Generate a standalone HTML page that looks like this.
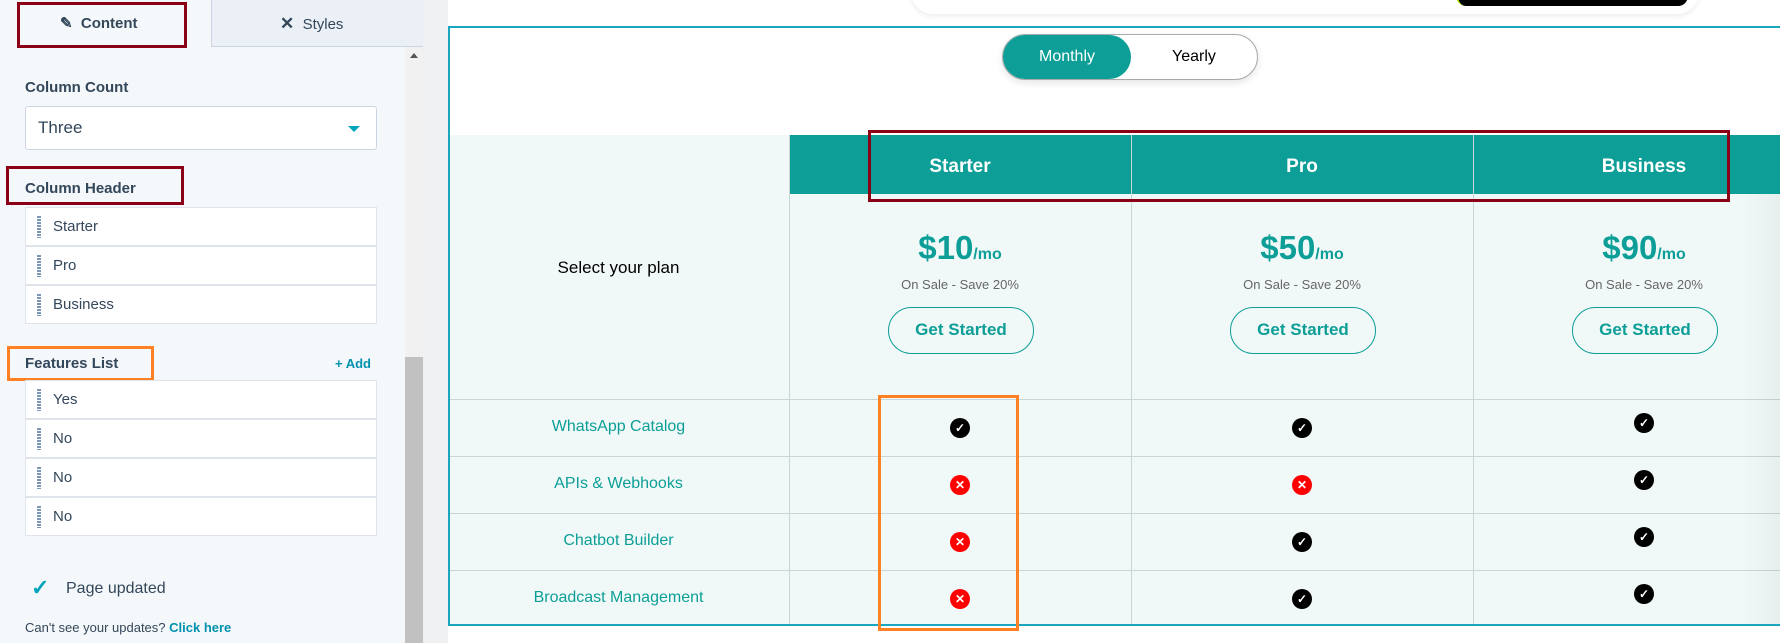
<!DOCTYPE html>
<html><head><style>
*{box-sizing:border-box;margin:0;padding:0}
body{width:1780px;height:643px;overflow:hidden;background:#fff;font-family:"Liberation Sans",sans-serif;position:relative}
.a{position:absolute}
.lp{left:0;top:0;width:405px;height:643px;background:#f5f8fa}
.lbl{color:#33475b;font-weight:bold;font-size:15px}
.item{left:25px;width:352px;height:39px;background:#fff;border:1px solid #dfe3eb;font-size:15px;color:#33475b;line-height:37px;padding-left:27px}
.grip{position:absolute;left:11px;top:8px;width:4px;height:22px;background:repeating-linear-gradient(#7c98b6 0 2px,transparent 2px 3px)}
.cell{position:absolute;text-align:center}
.hd{color:#fff;font-weight:bold;font-size:19px;top:137px;height:59px;line-height:59px;width:342px}
.price{color:#0c9e97;font-weight:bold;font-size:33px;top:229px;width:342px}
.price small{font-size:16px;font-weight:bold}
.sale{color:#666;font-size:13px;top:277px;width:342px}
.btn{top:307px;width:146px;height:47px;border:1.5px solid #0c9e97;border-radius:24px;color:#0c9e97;font-weight:bold;font-size:17px;line-height:44px}
.feat{color:#0c9e97;font-size:16px;width:341px;left:448px}
.ic{width:20px;height:20px;border-radius:50%;color:#fff;font-size:12px;line-height:20px;text-align:center;font-weight:bold}
.ok{background:#000}.no{background:#f00}
</style></head><body>
<div class="a lp"></div>
<div class="a" style="left:211px;top:0;width:212px;height:47px;background:#eaf0f6;border-left:1px solid #cbd6e2;border-bottom:1px solid #cbd6e2"></div>
<div class="a" style="left:17px;top:2px;width:170px;height:46px;border:3px solid #8b0016"></div>
<div class="a lbl" style="left:60px;top:14px;font-size:15px">✎&nbsp; Content</div>
<div class="a" style="left:280px;top:14px;font-size:15px;color:#33475b"><b style="font-size:17px">✕</b>&nbsp; Styles</div>
<div class="a" style="left:405px;top:47px;width:18px;height:596px;background:#f1f1f1"></div>
<div class="a" style="left:405px;top:357px;width:18px;height:286px;background:#c1c1c1"></div>
<div class="a" style="left:410px;top:49px;border:4px solid transparent;border-bottom:5px solid #555"></div>
<div class="a" style="left:423px;top:0;width:25px;height:643px;background:#eef0f2"></div>
<div class="a lbl" style="left:25px;top:79px">Column Count</div>
<div class="a" style="left:25px;top:106px;width:352px;height:44px;background:#fff;border:1px solid #cbd6e2;border-radius:3px;font-size:17px;color:#33475b;line-height:42px;padding-left:12px">Three<span class="a" style="right:16px;top:19px;border:6px solid transparent;border-top:6px solid #00a4bd;border-bottom:0"></span></div>
<div class="a" style="left:6px;top:166px;width:178px;height:39px;border:3px solid #8b0016"></div>
<div class="a lbl" style="left:25px;top:180px">Column Header</div>
<div class="a item" style="top:207px"><i class="grip"></i>Starter</div>
<div class="a item" style="top:246px"><i class="grip"></i>Pro</div>
<div class="a item" style="top:285px"><i class="grip"></i>Business</div>
<div class="a" style="left:7px;top:346px;width:147px;height:35px;border:3px solid #ff8124"></div>
<div class="a lbl" style="left:25px;top:355px">Features List</div>
<div class="a" style="left:335px;top:356px;font-size:13px;font-weight:bold;color:#0091ae">+ Add</div>
<div class="a item" style="top:380px"><i class="grip"></i>Yes</div>
<div class="a item" style="top:419px"><i class="grip"></i>No</div>
<div class="a item" style="top:458px"><i class="grip"></i>No</div>
<div class="a item" style="top:497px"><i class="grip"></i>No</div>
<div class="a" style="left:31px;top:575px;font-size:22px;color:#00a4bd;font-weight:bold">✓</div>
<div class="a" style="left:66px;top:580px;font-size:16px;color:#33475b">Page updated</div>
<div class="a" style="left:25px;top:620px;font-size:13px;color:#33475b">Can't see your updates? <b style="color:#0091ae">Click here</b></div>

<div class="a" style="left:911px;top:-20px;width:788px;height:34px;background:#fff;border-radius:0 0 22px 22px;box-shadow:0 2px 6px rgba(0,0,0,.08)"></div>
<div class="a" style="left:1456px;top:-10px;width:232px;height:16px;background:#000;border-radius:0 0 10px 10px;border-left:2px solid #b5e61d"></div>
<div class="a" style="left:448px;top:26px;width:1340px;height:600px;border:2px solid #1aa5c0;border-right:0"></div>
<div class="a" style="left:1002px;top:34px;width:256px;height:46px;border:1px solid #aaa;border-radius:23px;background:#fff;box-shadow:0 3px 8px rgba(0,0,0,.1)"></div>
<div class="a" style="left:1003px;top:35px;width:128px;height:44px;border-radius:22px;background:#0c9e97;color:#fff;font-size:16px;text-align:center;line-height:44px">Monthly</div>
<div class="a" style="left:1131px;top:35px;width:126px;height:44px;color:#000;font-size:16px;text-align:center;line-height:44px">Yearly</div>

<div class="a" style="left:450px;top:135px;width:1330px;height:489px;background:#f1f9f8"></div>
<div class="a" style="left:789px;top:135px;width:991px;height:59px;background:#0c9e97"></div>
<div class="a" style="left:789px;top:135px;width:1px;height:489px;background:#c9d6d5"></div>
<div class="a" style="left:1131px;top:135px;width:1px;height:489px;background:#c9d6d5"></div>
<div class="a" style="left:1473px;top:135px;width:1px;height:489px;background:#c9d6d5"></div>
<div class="a" style="left:450px;top:399px;width:1330px;height:1px;background:#c9d6d5"></div>
<div class="a" style="left:450px;top:456px;width:1330px;height:1px;background:#c9d6d5"></div>
<div class="a" style="left:450px;top:513px;width:1330px;height:1px;background:#c9d6d5"></div>
<div class="a" style="left:450px;top:570px;width:1330px;height:1px;background:#c9d6d5"></div>
<div class="a" style="left:1740px;top:194px;width:40px;height:430px;background:linear-gradient(90deg,rgba(0,0,0,0),rgba(0,0,0,.04))"></div>

<div class="cell hd" style="left:789px">Starter</div>
<div class="cell hd" style="left:1131px">Pro</div>
<div class="cell hd" style="left:1473px">Business</div>
<div class="cell" style="left:448px;width:341px;top:258px;font-size:17px;color:#000">Select your plan</div>
<div class="cell price" style="left:789px">$10<small>/mo</small></div>
<div class="cell price" style="left:1131px">$50<small>/mo</small></div>
<div class="cell price" style="left:1473px">$90<small>/mo</small></div>
<div class="cell sale" style="left:789px">On Sale - Save 20%</div>
<div class="cell sale" style="left:1131px">On Sale - Save 20%</div>
<div class="cell sale" style="left:1473px">On Sale - Save 20%</div>
<div class="cell btn" style="left:888px">Get Started</div>
<div class="cell btn" style="left:1230px">Get Started</div>
<div class="cell btn" style="left:1572px">Get Started</div>

<div class="cell feat" style="top:418px">WhatsApp Catalog</div>
<div class="cell feat" style="top:475px">APIs &amp; Webhooks</div>
<div class="cell feat" style="top:532px">Chatbot Builder</div>
<div class="cell feat" style="top:589px">Broadcast Management</div>

<div class="cell ic ok" style="left:950px;top:418px">✓</div>
<div class="cell ic no" style="left:950px;top:475px">✕</div>
<div class="cell ic no" style="left:950px;top:532px">✕</div>
<div class="cell ic no" style="left:950px;top:589px">✕</div>
<div class="cell ic ok" style="left:1292px;top:418px">✓</div>
<div class="cell ic no" style="left:1292px;top:475px">✕</div>
<div class="cell ic ok" style="left:1292px;top:532px">✓</div>
<div class="cell ic ok" style="left:1292px;top:589px">✓</div>
<div class="cell ic ok" style="left:1634px;top:413px">✓</div>
<div class="cell ic ok" style="left:1634px;top:470px">✓</div>
<div class="cell ic ok" style="left:1634px;top:527px">✓</div>
<div class="cell ic ok" style="left:1634px;top:584px">✓</div>

<div class="a" style="left:868px;top:130px;width:862px;height:72px;border:3px solid #8b0016"></div>
<div class="a" style="left:878px;top:395px;width:141px;height:236px;border:3px solid #ff8124"></div>
</body></html>
